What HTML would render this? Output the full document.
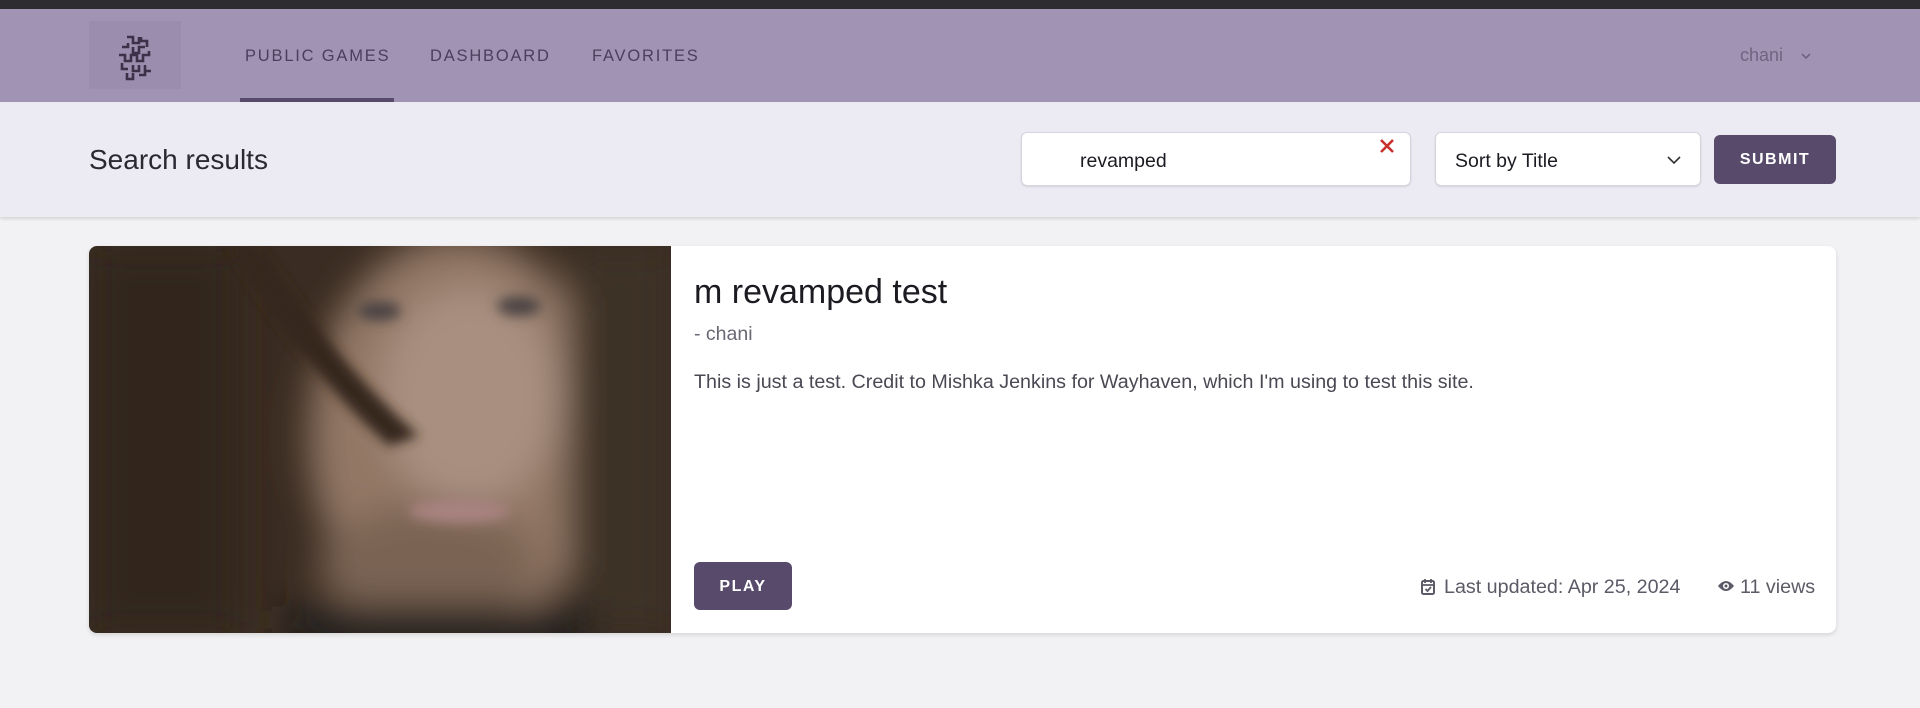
<!DOCTYPE html>
<html><head><meta charset="utf-8"><style>
*{box-sizing:border-box;margin:0;padding:0}
body{width:1920px;height:708px;background:#f2f2f4;font-family:"Liberation Sans",sans-serif;position:relative;overflow:hidden}
.top{position:absolute;left:0;top:0;width:1920px;height:9px;background:#2d2c31}
.nav{position:absolute;left:0;top:9px;width:1920px;height:93px;background:#a193b4}
.logo{position:absolute;left:89px;top:12px;width:92px;height:68px;background:#9b8dae}
.ni{position:absolute;top:38px;font-size:16.5px;letter-spacing:1.8px;color:#4a3f5c}
.ul{position:absolute;left:240px;top:89px;width:154px;height:4px;background:#574a6b}
.sub{position:absolute;left:0;top:102px;width:1920px;height:115px;background:#ecebf4;box-shadow:0 2px 3px rgba(0,0,0,.12)}
.h{position:absolute;left:89px;font-size:28px;color:#2a2833}
.inp{position:absolute;left:1021px;top:132px;width:390px;height:54px;background:#fff;border:1px solid #d6d4dc;border-radius:6px;box-shadow:0 1px 2px rgba(0,0,0,.1)}
.btn{position:absolute;background:#574a6b;color:#fff;border-radius:6px;font-weight:bold;letter-spacing:1.5px;font-size:16px;text-align:center}
.card{position:absolute;left:89px;top:246px;width:1747px;height:387px;background:#fff;border-radius:8px;box-shadow:0 2px 5px rgba(0,0,0,.12);overflow:hidden}
.meta{position:absolute;top:576px;font-size:19.7px;color:#5c5a66}
</style></head><body>
<div class="top"></div>
<div class="nav">
<div class="logo"><svg width="92" height="68" viewBox="0 0 92 68"><g stroke="#3b3148" stroke-width="2.6" fill="none">
<path d="M38 16h6v6h6v-6M52 16v4h6v6M33 26h6v-4M44 26v6h6v-6h6M60 30v4h-6M30 34h6v6h6v-6h6v6h6v-6h6M33 42v6h6M44 44v6h6v-6M56 44v6h6M38 52v6h6v-6M50 54h6v-4"/></g></svg></div>
<div class="ni" style="left:245px">PUBLIC GAMES</div>
<div class="ni" style="left:430px">DASHBOARD</div>
<div class="ni" style="left:592px">FAVORITES</div>
<div class="ul"></div>
<div style="position:absolute;left:1740px;top:36px;font-size:18px;color:#6f6580">chani</div>
<svg style="position:absolute;left:1800px;top:42px" width="12" height="10"><path d="M2 3l4 4 4-4" stroke="#6f6580" stroke-width="1.6" fill="none"/></svg>
</div>
<div class="sub">
<div class="h" style="top:42px">Search results</div>
</div>
<div class="inp"><span style="position:absolute;left:58px;top:17px;font-size:19.5px;color:#1d1b22">revamped</span>
<svg style="position:absolute;left:357px;top:5px" width="16" height="16"><path d="M2 2l12 12M14 2L2 14" stroke="#c9302c" stroke-width="2.6"/></svg></div>
<div class="inp" style="left:1435px;width:266px"><span style="position:absolute;left:19px;top:17px;font-size:19.5px;color:#1d1b22">Sort by Title</span>
<svg style="position:absolute;left:230px;top:21px" width="16" height="12"><path d="M2 3l6 6 6-6" stroke="#333" stroke-width="1.6" fill="none"/></svg></div>
<div class="btn" style="left:1714px;top:135px;width:122px;height:49px;line-height:50px">SUBMIT</div>
<div class="card">
<svg width="582" height="387" viewBox="0 0 582 387" style="position:absolute;left:0;top:0">
<defs><filter id="b"><feGaussianBlur stdDeviation="18"/></filter><filter id="b2"><feGaussianBlur stdDeviation="6"/></filter></defs>
<rect width="582" height="387" fill="#3a2c22"/>
<g filter="url(#b)">
<ellipse cx="370" cy="190" rx="150" ry="200" fill="#927765"/>
<ellipse cx="380" cy="150" rx="90" ry="110" fill="#a88f7f"/>
<ellipse cx="340" cy="320" rx="110" ry="60" fill="#7a6352"/>
<rect x="0" y="0" width="150" height="387" fill="#33261e"/>
<rect x="480" y="0" width="102" height="387" fill="#3d3026"/>
<rect x="200" y="360" width="300" height="40" fill="#1e1b1a"/>
</g>
<g filter="url(#b2)">
<ellipse cx="290" cy="65" rx="22" ry="10" fill="#4d4545"/>
<ellipse cx="430" cy="60" rx="22" ry="10" fill="#4d4545"/>
<ellipse cx="370" cy="265" rx="50" ry="12" fill="#a88280"/>
<path d="M170 0 Q250 120 330 190 L300 200 Q210 120 140 0Z" fill="#35271e"/>
</g>
</svg>
<div style="position:absolute;left:605px;top:27px;font-size:34px;color:#1d1b22">m revamped test</div>
<div style="position:absolute;left:605px;top:77px;font-size:19.5px;color:#6a6874">- chani</div>
<div style="position:absolute;left:605px;top:125px;font-size:19.7px;color:#4a4853">This is just a test. Credit to Mishka Jenkins for Wayhaven, which I'm using to test this site.</div>
</div>
<div class="btn" style="left:694px;top:562px;width:98px;height:48px;line-height:49px">PLAY</div>
<svg style="position:absolute;left:1420px;top:578px" width="16" height="18"><rect x="2" y="3" width="12" height="13" rx="1.5" fill="none" stroke="#5c5a66" stroke-width="2"/><path d="M2 7h12M5 1v4M11 1v4M5.5 11l2 2 3.5-4" stroke="#5c5a66" stroke-width="1.8" fill="none"/></svg>
<div class="meta" style="left:1444px">Last updated: Apr 25, 2024</div>
<svg style="position:absolute;left:1717px;top:579px" width="18" height="14"><path d="M1 7Q9-3 17 7Q9 17 1 7Z" fill="#5c5a66"/><circle cx="9" cy="7" r="3" fill="#fff"/><circle cx="9" cy="7" r="1.5" fill="#5c5a66"/></svg>
<div class="meta" style="left:1740px">11 views</div>
</body></html>
